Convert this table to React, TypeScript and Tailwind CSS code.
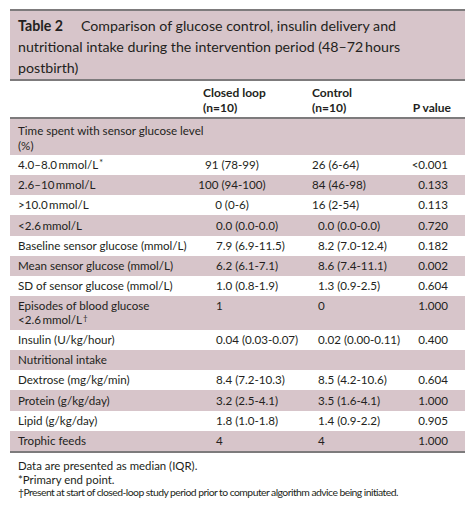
import React from "react";

type Row = {
  label: React.ReactNode;
  a?: string;
  b?: string;
  p?: string;
  up?: boolean;
  kind?: "section" | "double";
};

const rows: Row[] = [
  { label: <>Time spent with sensor glucose level<br />(%)</>, kind: "section" },
  { label: <>4.0–8.0{"\u2009"}mmol/L<sup className="text-[9px] relative top-[-3px] ml-[1px]">*</sup></>, a: "91 (78-99)", b: "26 (6-64)", p: "<0.001", up: true },
  { label: <>2.6–10{"\u2009"}mmol/L</>, a: "100 (94-100)", b: "84 (46-98)", p: "0.133", up: true },
  { label: <>&gt;10.0{"\u2009"}mmol/L</>, a: "0 (0-6)", b: "16 (2-54)", p: "0.113", up: true },
  { label: <>&lt;2.6{"\u2009"}mmol/L</>, a: "0.0 (0.0-0.0)", b: "0.0 (0.0-0.0)", p: "0.720" },
  { label: "Baseline sensor glucose (mmol/L)", a: "7.9 (6.9-11.5)", b: "8.2 (7.0-12.4)", p: "0.182" },
  { label: "Mean sensor glucose (mmol/L)", a: "6.2 (6.1-7.1)", b: "8.6 (7.4-11.1)", p: "0.002" },
  { label: "SD of sensor glucose (mmol/L)", a: "1.0 (0.8-1.9)", b: "1.3 (0.9-2.5)", p: "0.604" },
  {
    label: <>Episodes of blood glucose<br />&lt;2.6{"\u2009"}mmol/L<sup className="text-[8px] relative top-[-3px] ml-[1px]">†</sup></>,
    a: "1",
    b: "0",
    p: "1.000",
    kind: "double",
  },
  { label: "Insulin (U/kg/hour)", a: "0.04 (0.03-0.07)", b: "0.02 (0.00-0.11)", p: "0.400" },
  { label: "Nutritional intake", kind: "section" },
  { label: "Dextrose (mg/kg/min)", a: "8.4 (7.2-10.3)", b: "8.5 (4.2-10.6)", p: "0.604" },
  { label: "Protein (g/kg/day)", a: "3.2 (2.5-4.1)", b: "3.5 (1.6-4.1)", p: "1.000" },
  { label: "Lipid (g/kg/day)", a: "1.8 (1.0-1.8)", b: "1.4 (0.9-2.2)", p: "0.905" },
  { label: "Trophic feeds", a: "4", b: "4", p: "1.000" },
];

export default function App() {
  return (
    <div
      className="w-[474px] h-[507px] bg-white text-[#231f20] pt-[9px]"
      style={{ fontFamily: "Lato, 'Open Sans', sans-serif" }}
    >
      <div className="ml-[10px] w-[455px]">
        {/* Title */}
        <div className="border-t-2 border-b-2 border-[#7d7b7c] bg-[#d7c5ca] h-[72px] pl-[8px] pt-[4px] text-[14.2px] leading-[21px]">
          <span className="font-bold mr-[18px]">Table 2</span>
          Comparison of glucose control, insulin delivery and
          <br />
          nutritional intake during the intervention period (48–72{"\u2009"}hours
          <br />
          postbirth)
        </div>

        {/* Header */}
        <div className="grid grid-cols-[185px_110px_100px_60px] items-end h-[38px] border-b-2 border-[#7d7b7c] pb-[2px] text-[12px] leading-[15px] font-bold">
          <div />
          <div className="pl-[8px]">
            Closed loop
            <br />
            (n=10)
          </div>
          <div className="pl-[7px]">
            Control
            <br />
            (n=10)
          </div>
          <div className="text-right pr-[14px]">P value</div>
        </div>

        {/* Body */}
        <div className="text-[11.6px] border-b-2 border-[#7d7b7c]">
          {rows.map((r, i) => {
            const bg = i % 2 === 0 ? "bg-[#d7c5ca]" : "bg-white";
            if (r.kind === "section") {
              return (
                <div
                  key={i}
                  className={`${bg} pl-[8px] ${i === 0 ? "h-[36px] pt-[4px] leading-[15px]" : "h-[20px] leading-[20px]"}`}
                >
                  {r.label}
                </div>
              );
            }
            const dbl = r.kind === "double";
            return (
              <div
                key={i}
                className={`${bg} grid grid-cols-[185px_110px_100px_60px] ${dbl ? "h-[34px] pt-[3px] leading-[14px]" : i === 4 || i === 12 ? "h-[21px] leading-[21px]" : "h-[20px] leading-[20px]"}`}
              >
                <div className="pl-[8px] whitespace-nowrap">{r.label}</div>
                <div className={r.up ? "text-center pr-[36px]" : "pl-[21px]"}>{r.a}</div>
                <div className={r.up ? "pl-[7px]" : "pl-[13px]"}>{r.b}</div>
                <div className="text-right pr-[17px]">{r.p}</div>
              </div>
            );
          })}
        </div>

        {/* Footnotes */}
        <div className="pl-[8px] pt-[6px] text-[11.4px] leading-[13.5px]">
          <div>Data are presented as median (IQR).</div>
          <div>*Primary end point.</div>
          <div className="whitespace-nowrap text-[10.4px] tracking-[-0.55px]">
            †Present at start of closed-loop study period prior to computer algorithm advice being initiated.
          </div>
        </div>
      </div>
    </div>
  );
}
